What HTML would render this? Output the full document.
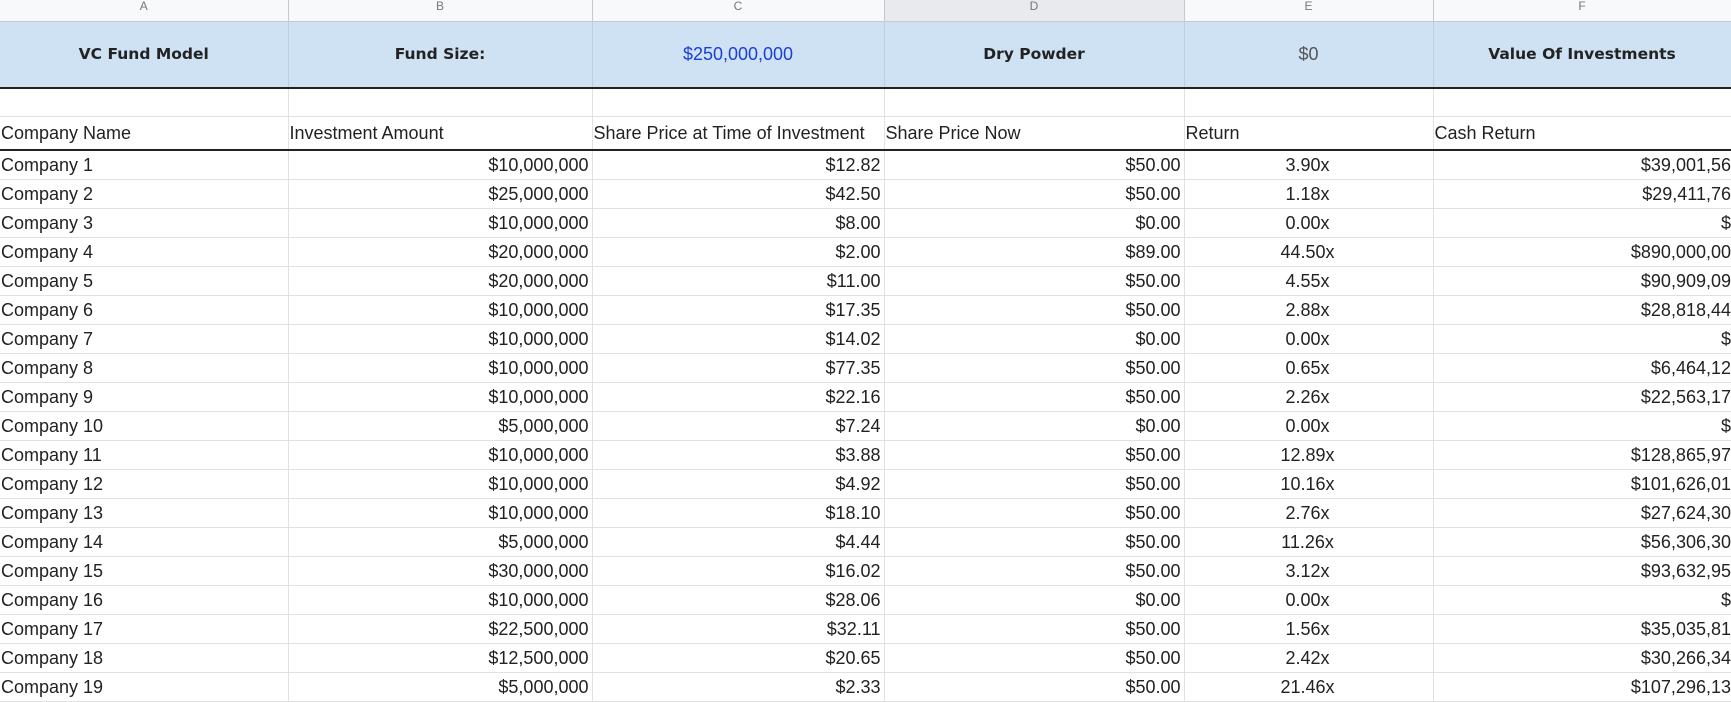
<!DOCTYPE html>
<html><head><style>
html,body{margin:0;width:1731px;height:683px;overflow:hidden;background:#fff;font-family:"Liberation Sans",Arial,sans-serif;}
table{border-collapse:collapse;table-layout:fixed;position:absolute;left:0;top:0;width:1731px}
td{border-right:1px solid #e1e1e1;border-bottom:1px solid #e1e1e1;padding:0 3px 0 1px;font-size:18px;color:#222;white-space:nowrap;overflow:hidden;height:28px;line-height:28px;vertical-align:top;box-sizing:border-box}
tr.ch td{height:21px;line-height:12px;background:#f8f9fa;color:#777;font-size:12px;text-align:center;border-right:1px solid #c8c8c8;border-bottom:1px solid #c8c8c8;padding:0}
tr.ch td.sel{background:#e8eaed}
tr.band td{height:67px;line-height:64px;background:#cfe2f3;text-align:center;font-weight:bold;border-right:1px solid #b9cfe2;border-bottom:2px solid #222;font-family:"DejaVu Sans","Liberation Sans",sans-serif;font-size:15.5px;vertical-align:top;padding:0}
tr.band td.n{font-weight:normal;font-family:"Liberation Sans",sans-serif;font-size:18px}
tr.e td{height:28px}
tr.h td{border-bottom:2px solid #222;height:28px;line-height:32px}
tr.d td{height:28px;line-height:28px}
td.r{text-align:right}
td.c{text-align:center}
td.f{padding-right:0;border-right:none}
</style></head><body>
<table>
<colgroup><col style="width:288px"><col style="width:304px"><col style="width:292px"><col style="width:300px"><col style="width:249px"><col style="width:298px"></colgroup>
<tr class="ch"><td>A</td><td>B</td><td>C</td><td class="sel">D</td><td>E</td><td>F</td></tr>
<tr class="band"><td>VC Fund Model</td><td>Fund Size:</td><td class="n" style="color:#1a3fd6">$250,000,000</td><td>Dry Powder</td><td class="n" style="color:#555">$0</td><td>Value Of Investments</td></tr>
<tr class="e"><td></td><td></td><td></td><td></td><td></td><td></td></tr>
<tr class="h"><td>Company Name</td><td>Investment Amount</td><td>Share Price at Time of Investment</td><td>Share Price Now</td><td>Return</td><td>Cash Return</td></tr>
<tr class="d"><td>Company 1</td><td class="r">$10,000,000</td><td class="r">$12.82</td><td class="r">$50.00</td><td class="c">3.90x</td><td class="r f">$39,001,56</td></tr>
<tr class="d"><td>Company 2</td><td class="r">$25,000,000</td><td class="r">$42.50</td><td class="r">$50.00</td><td class="c">1.18x</td><td class="r f">$29,411,76</td></tr>
<tr class="d"><td>Company 3</td><td class="r">$10,000,000</td><td class="r">$8.00</td><td class="r">$0.00</td><td class="c">0.00x</td><td class="r f">$</td></tr>
<tr class="d"><td>Company 4</td><td class="r">$20,000,000</td><td class="r">$2.00</td><td class="r">$89.00</td><td class="c">44.50x</td><td class="r f">$890,000,00</td></tr>
<tr class="d"><td>Company 5</td><td class="r">$20,000,000</td><td class="r">$11.00</td><td class="r">$50.00</td><td class="c">4.55x</td><td class="r f">$90,909,09</td></tr>
<tr class="d"><td>Company 6</td><td class="r">$10,000,000</td><td class="r">$17.35</td><td class="r">$50.00</td><td class="c">2.88x</td><td class="r f">$28,818,44</td></tr>
<tr class="d"><td>Company 7</td><td class="r">$10,000,000</td><td class="r">$14.02</td><td class="r">$0.00</td><td class="c">0.00x</td><td class="r f">$</td></tr>
<tr class="d"><td>Company 8</td><td class="r">$10,000,000</td><td class="r">$77.35</td><td class="r">$50.00</td><td class="c">0.65x</td><td class="r f">$6,464,12</td></tr>
<tr class="d"><td>Company 9</td><td class="r">$10,000,000</td><td class="r">$22.16</td><td class="r">$50.00</td><td class="c">2.26x</td><td class="r f">$22,563,17</td></tr>
<tr class="d"><td>Company 10</td><td class="r">$5,000,000</td><td class="r">$7.24</td><td class="r">$0.00</td><td class="c">0.00x</td><td class="r f">$</td></tr>
<tr class="d"><td>Company 11</td><td class="r">$10,000,000</td><td class="r">$3.88</td><td class="r">$50.00</td><td class="c">12.89x</td><td class="r f">$128,865,97</td></tr>
<tr class="d"><td>Company 12</td><td class="r">$10,000,000</td><td class="r">$4.92</td><td class="r">$50.00</td><td class="c">10.16x</td><td class="r f">$101,626,01</td></tr>
<tr class="d"><td>Company 13</td><td class="r">$10,000,000</td><td class="r">$18.10</td><td class="r">$50.00</td><td class="c">2.76x</td><td class="r f">$27,624,30</td></tr>
<tr class="d"><td>Company 14</td><td class="r">$5,000,000</td><td class="r">$4.44</td><td class="r">$50.00</td><td class="c">11.26x</td><td class="r f">$56,306,30</td></tr>
<tr class="d"><td>Company 15</td><td class="r">$30,000,000</td><td class="r">$16.02</td><td class="r">$50.00</td><td class="c">3.12x</td><td class="r f">$93,632,95</td></tr>
<tr class="d"><td>Company 16</td><td class="r">$10,000,000</td><td class="r">$28.06</td><td class="r">$0.00</td><td class="c">0.00x</td><td class="r f">$</td></tr>
<tr class="d"><td>Company 17</td><td class="r">$22,500,000</td><td class="r">$32.11</td><td class="r">$50.00</td><td class="c">1.56x</td><td class="r f">$35,035,81</td></tr>
<tr class="d"><td>Company 18</td><td class="r">$12,500,000</td><td class="r">$20.65</td><td class="r">$50.00</td><td class="c">2.42x</td><td class="r f">$30,266,34</td></tr>
<tr class="d"><td>Company 19</td><td class="r">$5,000,000</td><td class="r">$2.33</td><td class="r">$50.00</td><td class="c">21.46x</td><td class="r f">$107,296,13</td></tr>
</table>
</body></html>
